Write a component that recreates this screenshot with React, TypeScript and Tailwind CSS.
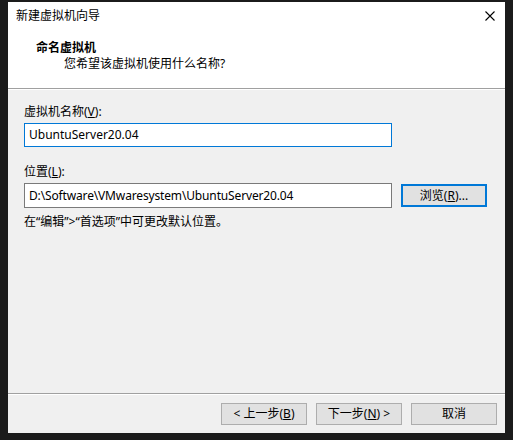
const font = { fontFamily: '"Noto Sans", "Noto Sans CJK SC", sans-serif' };

const WinButton = ({ children, focused = false }: { children: React.ReactNode; focused?: boolean }) => (
  <button
    className={
      focused
        ? 'flex h-[23px] w-[86px] items-center justify-center border-2 border-[#0078d7] bg-[#e1e1e1] text-[12px] leading-[16px] text-black'
        : 'flex h-[22px] w-[86px] items-center justify-center border border-[#adadad] bg-[#e1e1e1] text-[12px] leading-[16px] text-black'
    }
  >
    {children}
  </button>
);

const App = () => {
  return (
    <div className="h-[440px] w-[513px] bg-[#1b1b1b] pt-[2px] pl-[8px]" style={font}>
      <div className="flex h-[431px] w-[497px] flex-col bg-[#f0f0f0] text-[12px] leading-[16px] text-black">
        {/* Header */}
        <div className="h-[86px] bg-white">
          <div className="flex items-start justify-between pt-[6px] pl-[8px] pr-[10px]">
            <span>新建虚拟机向导</span>
            <svg className="mt-[3px] h-[10px] w-[10px]" viewBox="0 0 10 10">
              <path d="M0.5 0.5 L9.5 9.5 M9.5 0.5 L0.5 9.5" stroke="#000" strokeWidth="1.1" fill="none" />
            </svg>
          </div>
          <div className="mt-[16px] pl-[28px] font-bold">命名虚拟机</div>
          <div className="pl-[56px]">您希望该虚拟机使用什么名称?</div>
        </div>
        <div className="h-[1px] bg-[#a0a0a0]" />
        <div className="h-[1px] bg-white" />

        {/* Body */}
        <div className="flex flex-1 flex-col pt-[14px] pl-[16px]">
          <div>
            虚拟机名称(<u>V</u>):
          </div>
          <div className="mt-[3px] flex h-[24px] w-[368px] items-center border border-[#0078d7] bg-white pl-[4px]">
            UbuntuServer20.04
          </div>
          <div className="mt-[17px]">
            位置(<u>L</u>):
          </div>
          <div className="mt-[3px] flex items-center gap-[9px]">
            <div className="flex h-[25px] w-[368px] items-center border border-[#7a7a7a] bg-white pl-[4px] tracking-[-0.15px]">
              D:\Software\VMwaresystem\UbuntuServer20.04
            </div>
            <WinButton focused>
              浏览(<u>R</u>)...
            </WinButton>
          </div>
          <div className="mt-[6px]">{'在“编辑”>“首选项”中可更改默认位置。'}</div>
        </div>

        {/* Footer */}
        <div className="h-[1px] bg-[#a0a0a0]" />
        <div className="h-[1px] bg-white" />
        <div className="flex h-[38px] justify-end gap-[9px] pt-[8px] pr-[8px]">
          <WinButton>
            &lt; 上一步(<u>B</u>)
          </WinButton>
          <WinButton>
            下一步(<u>N</u>) &gt;
          </WinButton>
          <WinButton>取消</WinButton>
        </div>
      </div>
    </div>
  );
};

export default App;
